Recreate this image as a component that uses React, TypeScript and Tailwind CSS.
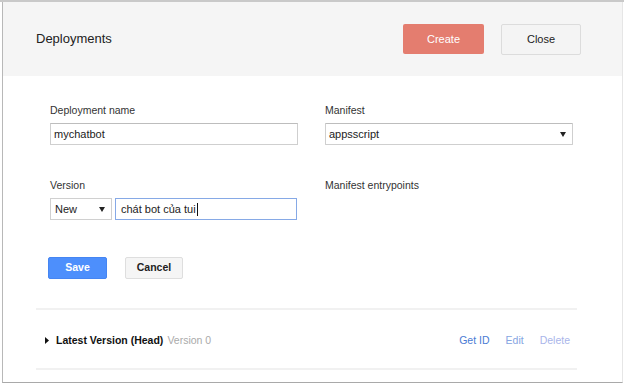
import React from 'react';

const Caret = () => (
  <svg width="6" height="5" viewBox="0 0 6 5" className="shrink-0">
    <path d="M0 0h6L3 5z" fill="#222" />
  </svg>
);

const Label = ({ children }: { children: React.ReactNode }) => (
  <div className="text-[10.5px] leading-[13px] text-[#333]">{children}</div>
);

export default function App() {
  return (
    <div className="w-[624px] h-[384px] bg-white overflow-hidden font-['Liberation_Sans',Arial,sans-serif] text-[#222]">
      {/* strip of the page behind the dialog */}
      <div className="h-[2px] bg-[#c9c9c9]" />
      <div className="ml-[2px] w-[621px] h-[381px] border-l border-b border-r border-l-[#b8b8b8] border-b-[#a9a9a9] border-r-[#e6e6e6] flex flex-col">
        {/* Header */}
        <div className="h-[74px] bg-[#f5f5f5] flex items-center pl-[33px] pr-[41px]">
          <div className="text-[13px] text-[#222]">Deployments</div>
          <div className="ml-auto flex items-center gap-[17px]">
            <button className="w-[81px] h-[30px] rounded-[2px] bg-[#e47d6f] text-white text-[11px]">
              Create
            </button>
            <button className="w-[80px] h-[31px] rounded-[2px] bg-[#f4f4f4] border border-[#dcdcdc] text-[11px] text-[#222]">
              Close
            </button>
          </div>
        </div>

        {/* Form */}
        <div className="pl-[47px] pt-[28px]">
          <div className="grid grid-cols-[248px_248px] gap-x-[27px]">
            <div>
              <Label>Deployment name</Label>
              <div className="mt-[6px] h-[22px] border border-[#cfcfcf] border-t-[#bdbdbd] flex items-center px-[3px] text-[11px] text-[#222]">
                mychatbot
              </div>
            </div>
            <div>
              <Label>Manifest</Label>
              <div className="mt-[6px] h-[22px] border border-[#cfcfcf] border-t-[#bdbdbd] rounded-[1px] flex items-center pl-[3px] pr-[6px] text-[11px] text-[#222]">
                appsscript
                <span className="ml-auto">
                  <Caret />
                </span>
              </div>
            </div>

            <div className="mt-[34px]">
              <Label>Version</Label>
              <div className="mt-[6px] flex gap-[3px]">
                <div className="w-[62px] h-[22px] border border-[#d0d0d0] flex items-center pl-[4px] pr-[6px] text-[11px]">
                  New
                  <span className="ml-auto">
                    <Caret />
                  </span>
                </div>
                <div className="w-[182px] h-[22px] border border-[#86a9e6] flex items-center pl-[5px] text-[11px]">
                  chát bot của tui
                  <span className="ml-[1px] w-px h-[13px] bg-[#111]" />
                </div>
              </div>
            </div>
            <div className="mt-[34px]">
              <Label>Manifest entrypoints</Label>
            </div>
          </div>

          <div className="mt-[37px] flex items-center gap-[18px]">
            <button className="-ml-[2px] w-[59px] h-[22px] rounded-[2px] bg-[#4d8ffc] border border-[#4585f2] text-white text-[10.5px] font-bold">
              Save
            </button>
            <button className="w-[58px] h-[22px] rounded-[2px] bg-[#f5f5f5] border border-[#dedede] text-[10.5px] font-bold text-[#222]">
              Cancel
            </button>
          </div>
        </div>

        {/* Deployment list */}
        <div className="ml-[33px] w-[541px] mt-[29px]">
          <div className="h-[2px] bg-[#f1f1f1]" />
          <div className="h-[58px] flex items-center pt-[3px] pl-[9px] pr-[7px] text-[10.5px]">
            <svg width="4" height="7" viewBox="0 0 4 7" className="mr-[7px]">
              <path d="M0 0l4 3.5L0 7z" fill="#111" />
            </svg>
            <span className="font-bold text-[#111]">Latest Version (Head)</span>
            <span className="ml-[4px] text-[#aaaaaa]">Version 0</span>
            <div className="ml-auto flex items-center gap-[16px] text-[10.5px]">
              <span className="text-[#4a7bd4]">Get ID</span>
              <span className="text-[#86a5e2]">Edit</span>
              <span className="text-[#a9b5ea]">Delete</span>
            </div>
          </div>
          <div className="h-[2px] bg-[#f1f1f1]" />
        </div>
      </div>
    </div>
  );
}
